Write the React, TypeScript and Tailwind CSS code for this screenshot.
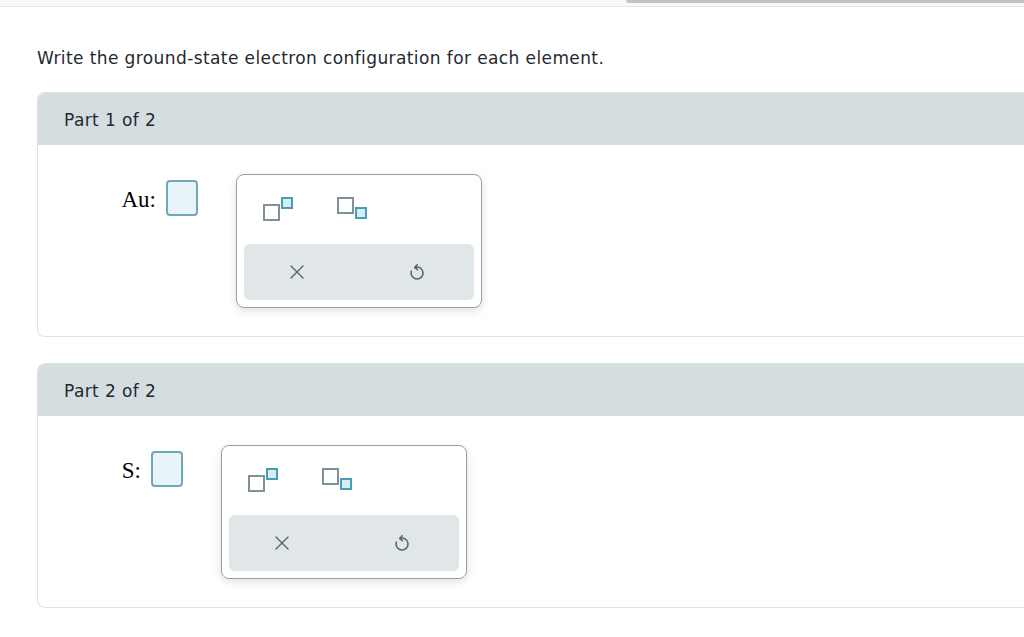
import { X } from 'lucide-react';

const SuperscriptIcon = () => (
  <svg width="34" height="26" viewBox="0 0 34 26" fill="none">
    <rect x="1" y="8" width="15" height="15" stroke="#7f9299" strokeWidth="2" fill="white" />
    <rect x="19" y="1" width="10" height="10" stroke="#4a9bb3" strokeWidth="2" fill="#d3edf3" />
  </svg>
);

const SubscriptIcon = () => (
  <svg width="34" height="26" viewBox="0 0 34 26" fill="none">
    <rect x="1" y="1" width="15" height="15" stroke="#7f9299" strokeWidth="2" fill="white" />
    <rect x="19" y="11" width="10" height="10" stroke="#4a9bb3" strokeWidth="2" fill="#d3edf3" />
  </svg>
);

const UndoIcon = () => (
  <svg width="20" height="20" viewBox="0 0 20 20" fill="none" stroke="#4f6873" strokeWidth="1.6" strokeLinecap="round" strokeLinejoin="round">
    <path d="M8 5.4 A6 6 0 1 1 4.3 9.3" />
    <path d="M10.2 2.8 L7.8 5.3 L10.4 7.6" />
  </svg>
);

const AnswerPad = () => (
  <div className="w-[246px] rounded-lg border border-[#8fa3ab] bg-white p-[7px] shadow-[0_3px_10px_rgba(0,0,0,0.12)]">
    <div className="flex h-[62px] items-start pl-[19px] pt-[15px]">
      <SuperscriptIcon />
      <div className="ml-[40px]">
        <SubscriptIcon />
      </div>
    </div>
    <div className="flex h-[56px] items-center rounded-md bg-[#e1e6e8]">
      <div className="flex w-1/2 justify-center pr-[10px]">
        <X size={24} strokeWidth={1.4} color="#4f6873" />
      </div>
      <div className="flex w-1/2 justify-center">
        <UndoIcon />
      </div>
    </div>
  </div>
);

const PartCard = ({ part, symbol, labelWidth }: { part: number; symbol: string; labelWidth: string }) => (
  <div className="w-[1010px] overflow-hidden rounded-l-lg border border-r-0 border-[#dde2e4]">
    <div className="flex h-[52px] items-center bg-[#d5dde0] pl-[26px] pt-[5px] text-[17px] tracking-[0.4px] text-[#1f2a30]">
      Part {part} of 2
    </div>
    <div className="flex h-[191px] items-start pt-[29px]">
      <div className={`flex items-center justify-end pt-[6px] ${labelWidth}`}>
        <span className="mr-[10px] pt-[3px] font-['Liberation_Serif',serif] text-[23px] text-black">{symbol}:</span>
        <div className="h-[36px] w-[32px] rounded-[4px] border-2 border-[#6fa8b9] bg-[#e8f4f7]" />
      </div>
      <div className="ml-[38px]">
        <AnswerPad />
      </div>
    </div>
  </div>
);

export default function App() {
  return (
    <div className="h-[637px] w-[1024px] overflow-hidden bg-white font-['DejaVu_Sans',sans-serif]">
      <div className="relative h-[7px] border-b border-[#e5e5e5] bg-[#f9f9f9]">
        <div className="absolute right-0 top-0 h-[3px] w-[398px] rounded-bl-md bg-[#c2c2c2]" />
      </div>
      <div className="pl-[37px] pt-[39px] text-[17px] tracking-[0.4px] text-[#1f2a30]">
        Write the ground-state electron configuration for each element.
      </div>
      <div className="mt-[20px] flex flex-col gap-[26px] pl-[37px]">
        <PartCard part={1} symbol="Au" labelWidth="w-[160px]" />
        <PartCard part={2} symbol="S" labelWidth="w-[145px]" />
      </div>
    </div>
  );
}
